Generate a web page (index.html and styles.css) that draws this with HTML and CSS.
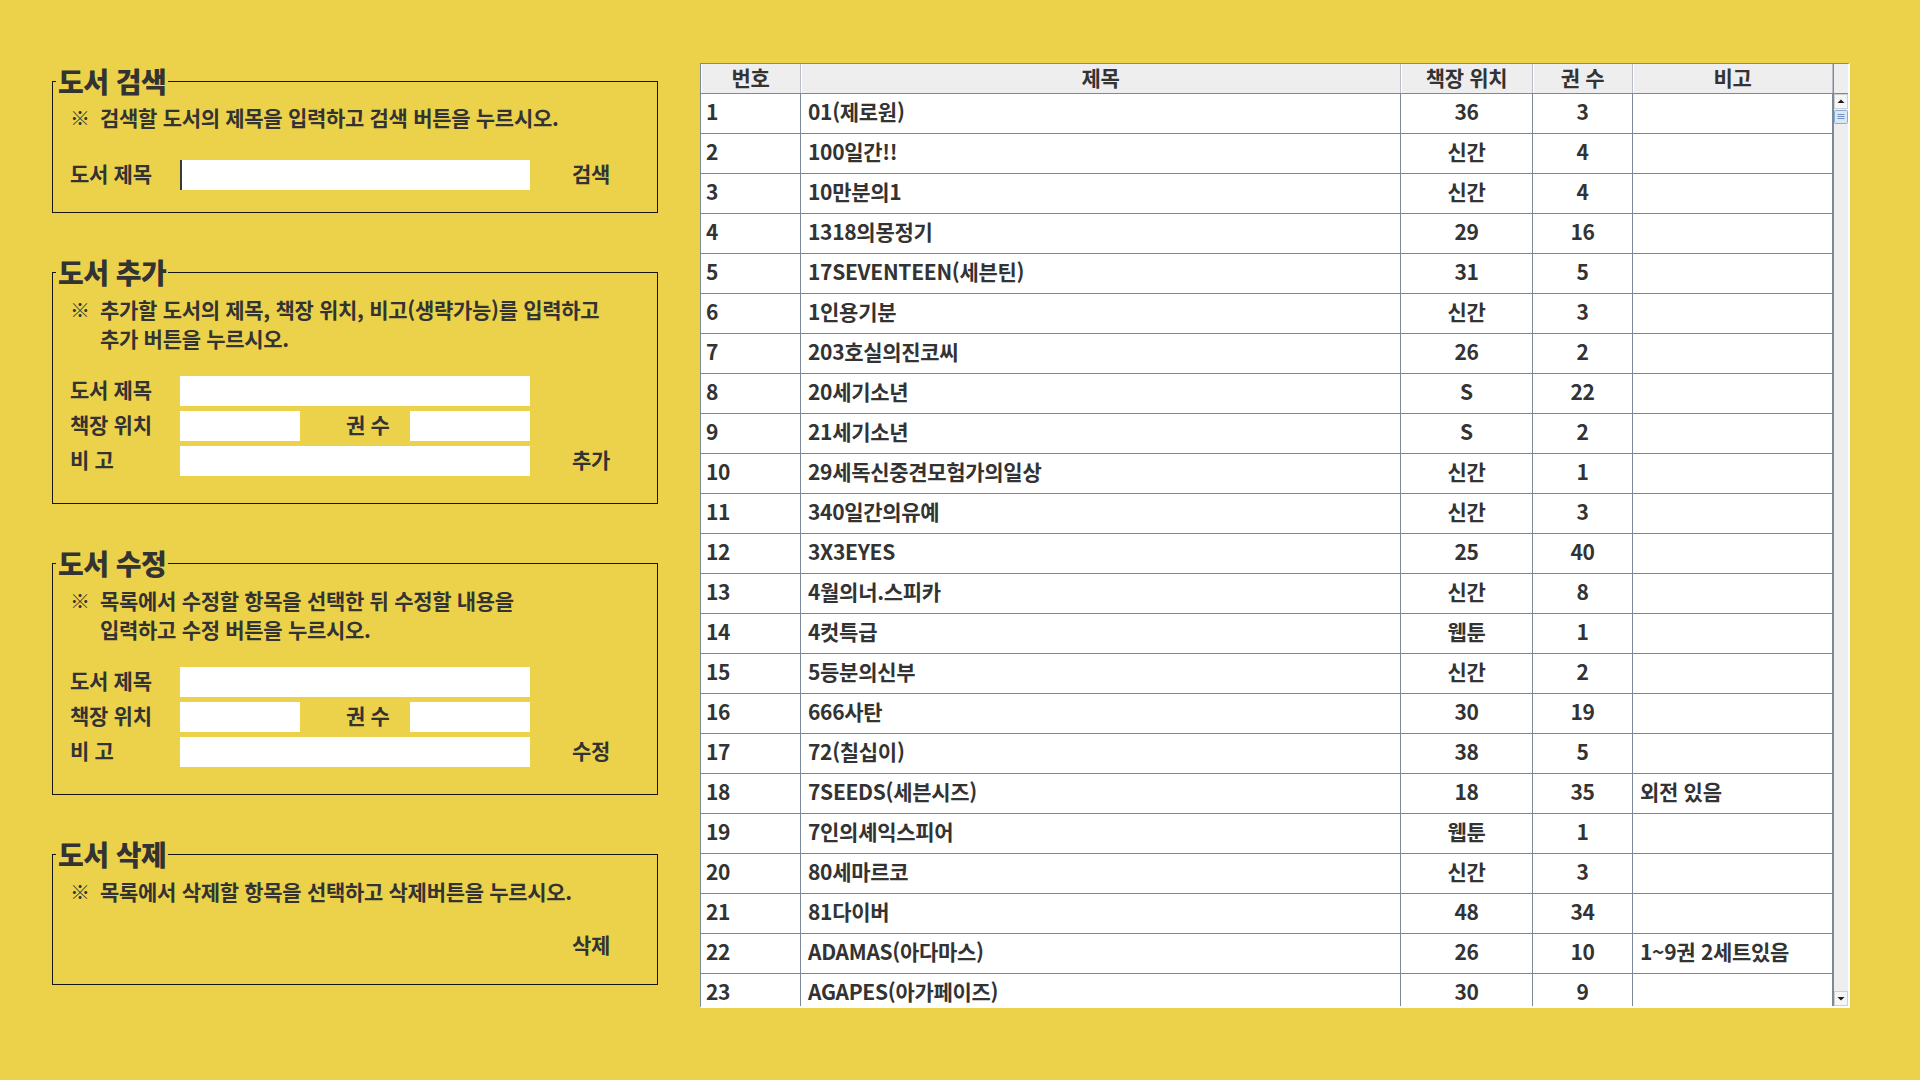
FILE: index.html
```html
<!DOCTYPE html>
<html lang="ko">
<head>
<meta charset="utf-8">
<title>도서 관리</title>
<link rel="stylesheet" href="styles.css">
</head>
<body>
<div class="app">
  <div class="left">
    <fieldset class="panel">
      <legend>도서 검색</legend>
      <div class="body first">
        <div class="notice"><span class="mark">※</span><span>검색할 도서의 제목을 입력하고 검색 버튼을 누르시오.</span></div>
        <div class="rows">
          <div class="row"><span class="lbl">도서 제목</span><input class="inp caret" type="text"><button class="btn">검색</button></div>
        </div>
      </div>
    </fieldset>

    <fieldset class="panel">
      <legend>도서 추가</legend>
      <div class="body">
        <div class="notice"><span class="mark">※</span><span>추가할 도서의 제목, 책장 위치, 비고(생략가능)를 입력하고<br>추가 버튼을 누르시오.</span></div>
        <div class="rows">
          <div class="row"><span class="lbl">도서 제목</span><input class="inp" type="text"></div>
          <div class="row"><span class="lbl">책장 위치</span><input class="inp short" type="text"><span class="lbl mid">권 수</span><input class="inp short" type="text"></div>
          <div class="row"><span class="lbl">비 고</span><input class="inp" type="text"><button class="btn">추가</button></div>
        </div>
      </div>
    </fieldset>

    <fieldset class="panel">
      <legend>도서 수정</legend>
      <div class="body">
        <div class="notice"><span class="mark">※</span><span>목록에서 수정할 항목을 선택한 뒤 수정할 내용을<br>입력하고 수정 버튼을 누르시오.</span></div>
        <div class="rows">
          <div class="row"><span class="lbl">도서 제목</span><input class="inp" type="text"></div>
          <div class="row"><span class="lbl">책장 위치</span><input class="inp short" type="text"><span class="lbl mid">권 수</span><input class="inp short" type="text"></div>
          <div class="row"><span class="lbl">비 고</span><input class="inp" type="text"><button class="btn">수정</button></div>
        </div>
      </div>
    </fieldset>

    <fieldset class="panel">
      <legend>도서 삭제</legend>
      <div class="body last">
        <div class="notice"><span class="mark">※</span><span>목록에서 삭제할 항목을 선택하고 삭제버튼을 누르시오.</span></div>
        <div class="row solo"><button class="btn">삭제</button></div>
      </div>
    </fieldset>
  </div>

  <div class="pane">
    <div class="thead">
      <div class="th">번호</div>
      <div class="th">제목</div>
      <div class="th">책장 위치</div>
      <div class="th">권 수</div>
      <div class="th">비고</div>
      <div class="th corner"></div>
    </div>
    <div class="tbody">
      <div class="rowsbox">
        <div class="tr"><div class="td n">1</div><div class="td t">01(제로원)</div><div class="td c">36</div><div class="td c">3</div><div class="td r"></div></div>
        <div class="tr"><div class="td n">2</div><div class="td t">100일간!!</div><div class="td c">신간</div><div class="td c">4</div><div class="td r"></div></div>
        <div class="tr"><div class="td n">3</div><div class="td t">10만분의1</div><div class="td c">신간</div><div class="td c">4</div><div class="td r"></div></div>
        <div class="tr"><div class="td n">4</div><div class="td t">1318의몽정기</div><div class="td c">29</div><div class="td c">16</div><div class="td r"></div></div>
        <div class="tr"><div class="td n">5</div><div class="td t">17SEVENTEEN(세븐틴)</div><div class="td c">31</div><div class="td c">5</div><div class="td r"></div></div>
        <div class="tr"><div class="td n">6</div><div class="td t">1인용기분</div><div class="td c">신간</div><div class="td c">3</div><div class="td r"></div></div>
        <div class="tr"><div class="td n">7</div><div class="td t">203호실의진코씨</div><div class="td c">26</div><div class="td c">2</div><div class="td r"></div></div>
        <div class="tr"><div class="td n">8</div><div class="td t">20세기소년</div><div class="td c">S</div><div class="td c">22</div><div class="td r"></div></div>
        <div class="tr"><div class="td n">9</div><div class="td t">21세기소년</div><div class="td c">S</div><div class="td c">2</div><div class="td r"></div></div>
        <div class="tr"><div class="td n">10</div><div class="td t">29세독신중견모험가의일상</div><div class="td c">신간</div><div class="td c">1</div><div class="td r"></div></div>
        <div class="tr"><div class="td n">11</div><div class="td t">340일간의유예</div><div class="td c">신간</div><div class="td c">3</div><div class="td r"></div></div>
        <div class="tr"><div class="td n">12</div><div class="td t">3X3EYES</div><div class="td c">25</div><div class="td c">40</div><div class="td r"></div></div>
        <div class="tr"><div class="td n">13</div><div class="td t">4월의너.스피카</div><div class="td c">신간</div><div class="td c">8</div><div class="td r"></div></div>
        <div class="tr"><div class="td n">14</div><div class="td t">4컷특급</div><div class="td c">웹툰</div><div class="td c">1</div><div class="td r"></div></div>
        <div class="tr"><div class="td n">15</div><div class="td t">5등분의신부</div><div class="td c">신간</div><div class="td c">2</div><div class="td r"></div></div>
        <div class="tr"><div class="td n">16</div><div class="td t">666사탄</div><div class="td c">30</div><div class="td c">19</div><div class="td r"></div></div>
        <div class="tr"><div class="td n">17</div><div class="td t">72(칠십이)</div><div class="td c">38</div><div class="td c">5</div><div class="td r"></div></div>
        <div class="tr"><div class="td n">18</div><div class="td t">7SEEDS(세븐시즈)</div><div class="td c">18</div><div class="td c">35</div><div class="td r">외전 있음</div></div>
        <div class="tr"><div class="td n">19</div><div class="td t">7인의셰익스피어</div><div class="td c">웹툰</div><div class="td c">1</div><div class="td r"></div></div>
        <div class="tr"><div class="td n">20</div><div class="td t">80세마르코</div><div class="td c">신간</div><div class="td c">3</div><div class="td r"></div></div>
        <div class="tr"><div class="td n">21</div><div class="td t">81다이버</div><div class="td c">48</div><div class="td c">34</div><div class="td r"></div></div>
        <div class="tr"><div class="td n">22</div><div class="td t">ADAMAS(아다마스)</div><div class="td c">26</div><div class="td c">10</div><div class="td r">1~9권 2세트있음</div></div>
        <div class="tr"><div class="td n">23</div><div class="td t">AGAPES(아가페이즈)</div><div class="td c">30</div><div class="td c">9</div><div class="td r"></div></div>
      </div>
      <div class="sb">
        <svg class="sb-btn" width="14" height="15" viewBox="0 0 14 15"><rect x="0.5" y="0.5" width="13" height="14" fill="#f6f6f6" stroke="#cfcfcf"/><polygon points="3.5,9 10.5,9 7,5.5" fill="#1e1e1e"/></svg>
        <svg class="sb-thumb" width="14" height="14" viewBox="0 0 14 14"><rect x="0.5" y="0.5" width="13" height="13" rx="1" fill="#dce7f5" stroke="#8eaad6"/><path d="M3.5 4.5H10.5M3.5 6.5H10.5M3.5 8.5H10.5" stroke="#7392c8" stroke-width="1"/></svg>
        <div class="sb-track"></div>
        <svg class="sb-btn" width="14" height="15" viewBox="0 0 14 15"><rect x="0.5" y="0.5" width="13" height="14" fill="#f6f6f6" stroke="#cfcfcf"/><polygon points="3.5,6 10.5,6 7,9.5" fill="#1e1e1e"/></svg>
      </div>
    </div>
  </div>
</div>
</body>
</html>
```

FILE: styles.css
```css
html, body {
  margin: 0;
  padding: 0;
}
body {
  background: #ecd24a;
  font-family: "Noto Sans CJK KR", "Noto Sans", sans-serif;
  color: #333333;
  width: 1920px;
  height: 1080px;
  overflow: hidden;
}
.app {
  display: flex;
  align-items: flex-start;
  gap: 42px;
  padding: 63px 0 0 52px;
}
.left {
  width: 606px;
  padding-top: 4px;
  display: flex;
  flex-direction: column;
  gap: 45.5px;
}
.panel {
  margin: 0;
  padding: 0;
  border: 1px solid #151515;
  min-width: 0;
  box-sizing: border-box;
  width: 606px;
}
.panel legend {
  font-size: 28px;
  font-weight: 900;
  line-height: 28px;
  padding: 0 2px;
  margin-left: 3px;
  letter-spacing: -0.5px;
  color: #333;
}
.body {
  padding: 9px 0 27px 17px;
}
.body.first {
  padding-top: 8px;
  padding-bottom: 22px;
}
.body.first .rows {
  margin-top: 27.5px;
}
.body.last {
  padding-bottom: 23px;
}
.notice {
  display: flex;
  font-size: 21px;
  font-weight: 700;
  line-height: 29px;
  letter-spacing: -0.3px;
}
.mark {
  width: 30px;
  flex: none;
  font-size: 20px;
}
.rows {
  margin-top: 22.5px;
  display: flex;
  flex-direction: column;
  gap: 5px;
}
.row {
  display: flex;
  align-items: center;
  height: 30px;
}
.row.solo {
  margin-top: 25px;
}
.lbl {
  width: 110px;
  flex: none;
  font-size: 21px;
  font-weight: 700;
  letter-spacing: -0.3px;
  line-height: 26px;
  margin-bottom: 4px;
  box-sizing: border-box;
}
.lbl.mid {
  padding-left: 46px;
}
.inp {
  display: block;
  width: 350px;
  height: 30px;
  border: 0;
  padding: 0;
  margin: 0;
  background: #ffffff;
  box-sizing: border-box;
  outline: none;
}
.inp.short {
  width: 120px;
}
.inp.caret {
  border-left: 2px solid #3a3a3a;
}
.btn {
  margin: 0 0 4px 42px;
  padding: 0;
  border: 0;
  background: transparent;
  font-family: inherit;
  font-size: 21px;
  font-weight: 700;
  letter-spacing: -0.3px;
  color: #333;
  line-height: 26px;
}
.row.solo .btn {
  margin-left: 502px;
}

/* table */
.pane {
  width: 1150px;
  height: 945px;
  box-sizing: border-box;
  border-top: 1px solid #7a8a99;
  border-left: 1px solid #7a8a99;
  border-right: 2px solid #ffffff;
  border-bottom: 2px solid #ffffff;
  background: #ffffff;
  display: flex;
  flex-direction: column;
}
.thead {
  display: grid;
  grid-template-columns: 100px 600px 132px 100px 200px 15px;
  height: 30px;
  box-sizing: border-box;
  background: #eeeeee;
  border-bottom: 1px solid #7a8a99;
  flex: none;
}
.th {
  box-sizing: border-box;
  border-right: 1px solid #b9bec4;
  box-shadow: inset 1px 0 0 #ffffff;
  text-align: center;
  font-size: 21px;
  font-weight: 700;
  letter-spacing: -0.3px;
  line-height: 27px;
}
.th.corner {
  border-right: 0;
  border-left: 1px solid #7a8a99;
  box-shadow: none;
}
.tbody {
  display: flex;
  flex: 1;
  overflow: hidden;
}
.rowsbox {
  width: 1132px;
  flex: none;
  overflow: hidden;
}
.tr {
  display: grid;
  grid-template-columns: 100px 600px 132px 100px 200px;
  height: 40px;
}
.td {
  box-sizing: border-box;
  border-right: 1px solid #7a8a99;
  border-bottom: 1px solid #7a8a99;
  font-size: 21px;
  font-weight: 700;
  letter-spacing: -0.3px;
  line-height: 35px;
  white-space: nowrap;
  overflow: hidden;
}
.td.n { padding-left: 5px; }
.td.t { padding-left: 7px; }
.td.c { text-align: center; }
.td.r { padding-left: 7px; }
.sb {
  width: 15px;
  flex: none;
  box-sizing: border-box;
  border-left: 1px solid #7a8a99;
  background: #eeeeee;
  display: flex;
  flex-direction: column;
}
.sb-btn, .sb-thumb {
  display: block;
  flex: none;
}
.sb-thumb {
  margin-top: 1px;
}
.sb-track {
  flex: 1;
}
```
